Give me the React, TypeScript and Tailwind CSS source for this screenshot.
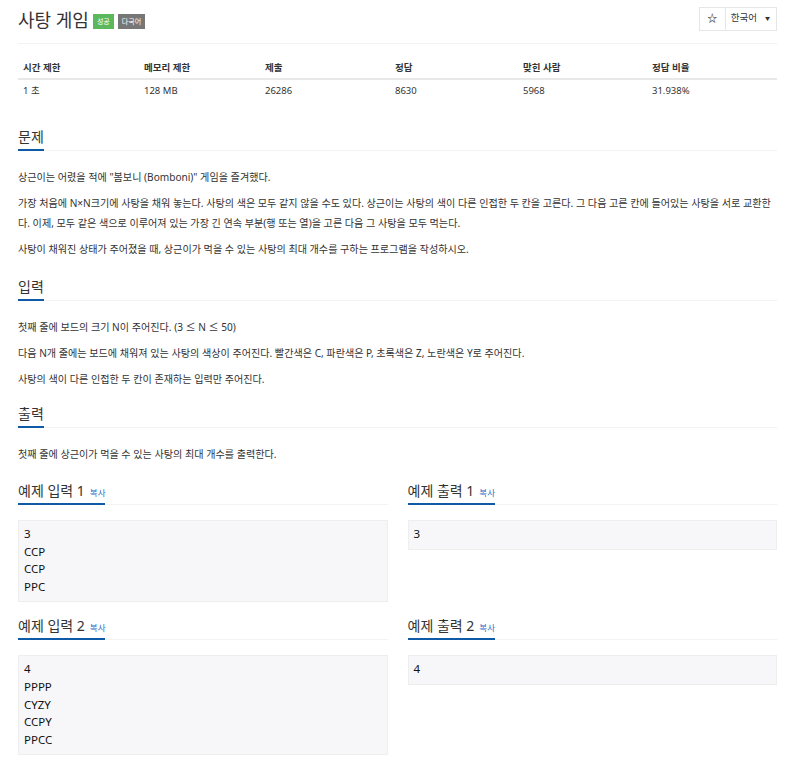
import React from "react";

const font = { fontFamily: '"Noto Sans", "Noto Sans CJK KR", sans-serif' };

const stats = [
  { label: "시간 제한", value: "1 초", w: "w-[121px]" },
  { label: "메모리 제한", value: "128 MB", w: "w-[121px]" },
  { label: "제출", value: "26286", w: "w-[130px]" },
  { label: "정답", value: "8630", w: "w-[128px]" },
  { label: "맞힌 사람", value: "5968", w: "w-[129px]" },
  { label: "정답 비율", value: "31.938%", w: "flex-1" },
];

function Heading({ children }: { children: React.ReactNode }) {
  return (
    <div className="border-b border-[#f3f3f3] mb-[16px]">
      <h2 className="inline-block text-[14px] leading-[22px] text-[#333] pb-[1px] border-b-2 border-[#0e5aa7] -mb-px">
        {children}
      </h2>
    </div>
  );
}

function SampleHeading({ title }: { title: string }) {
  return (
    <div className="border-b border-[#f3f3f3] mb-[15px]">
      <h2 className="inline-flex items-baseline text-[14px] leading-[20px] text-[#333] pb-0 border-b-2 border-[#0e5aa7] -mb-px">
        {title}
        <span className="text-[8.5px] text-[#2b6cc4] ml-[5px]">복사</span>
      </h2>
    </div>
  );
}

function SampleBox({ lines }: { lines: string[] }) {
  return (
    <pre
      className="bg-[#f7f7f9] border border-[#eeeeee] px-[5px] pt-[4px] pb-[6px] text-[11.5px] leading-[17.6px] text-[#111]"
      style={font}
    >
      {lines.join("\n")}
    </pre>
  );
}

export default function App() {
  return (
    <div className="bg-white min-h-[762px] pl-[18px] pr-[23px] text-[#333]" style={font}>
      <div className="flex items-center justify-between h-[44px] border-b border-[#f3f3f3]">
        <div className="flex items-center gap-[4px]">
          <h1 className="text-[18px] leading-[30px] text-[#333] mr-0 mt-[-4px]">사탕 게임</h1>
          <span className="bg-[#5cb85c] text-white text-[7px] leading-[15px] h-[15px] px-[4px]">
            성공
          </span>
          <span className="bg-[#777777] text-white text-[7px] leading-[15px] h-[15px] px-[4px]">
            다국어
          </span>
        </div>
        <div className="flex border border-[#e6e6e6] h-[24px] mt-[-6px] text-[9.5px]">
          <div className="w-[26px] flex items-center justify-center border-r border-[#e6e6e6] text-[10px] font-bold">
            ☆
          </div>
          <div className="flex items-center pl-[5px] pr-[6px] gap-[8px]">
            <span>한국어</span>
            <span className="text-[5px]">▼</span>
          </div>
        </div>
      </div>

      <div className="mt-[14px] text-[9.5px]">
        <div className="flex h-[22px] items-center font-bold border-b-2 border-[#e8e8e8] pl-[5px]">
          {stats.map((s) => (
            <div key={s.label} className={s.w}>
              {s.label}
            </div>
          ))}
        </div>
        <div className="flex h-[23px] items-center pl-[5px]">
          {stats.map((s) => (
            <div key={s.label} className={s.w}>
              {s.value}
            </div>
          ))}
        </div>
      </div>

      <section className="mt-[21px]">
        <Heading>문제</Heading>
        <div className="text-[10.1px] leading-[20px]">
          <p className="mb-[6px]">상근이는 어렸을 적에 "봄보니 (Bomboni)" 게임을 즐겨했다.</p>
          <p className="mb-[6px]">
            가장 처음에 N×N크기에 사탕을 채워 놓는다. 사탕의 색은 모두 같지 않을 수도 있다. 상근이는 사탕의 색이 다른 인접한 두 칸을 고른다. 그 다음 고른 칸에 들어있는 사탕을 서로 교환한다. 이제, 모두 같은 색으로 이루어져 있는 가장 긴 연속 부분(행 또는 열)을 고른 다음 그 사탕을 모두 먹는다.
          </p>
          <p>사탕이 채워진 상태가 주어졌을 때, 상근이가 먹을 수 있는 사탕의 최대 개수를 구하는 프로그램을 작성하시오.</p>
        </div>
      </section>

      <section className="mt-[15px]">
        <Heading>입력</Heading>
        <div className="text-[10.1px] leading-[20px]">
          <p className="mb-[6px]">첫째 줄에 보드의 크기 N이 주어진다. (3 ≤ N ≤ 50)</p>
          <p className="mb-[6px]">
            다음 N개 줄에는 보드에 채워져 있는 사탕의 색상이 주어진다. 빨간색은 C, 파란색은 P, 초록색은 Z, 노란색은 Y로 주어진다.
          </p>
          <p>사탕의 색이 다른 인접한 두 칸이 존재하는 입력만 주어진다.</p>
        </div>
      </section>

      <section className="mt-[12px]">
        <Heading>출력</Heading>
        <div className="text-[10.1px] leading-[20px]">
          <p>첫째 줄에 상근이가 먹을 수 있는 사탕의 최대 개수를 출력한다.</p>
        </div>
      </section>

      <div className="grid grid-cols-2 gap-x-[20px] mt-[14px]">
        <div>
          <SampleHeading title="예제 입력 1" />
          <SampleBox lines={["3", "CCP", "CCP", "PPC"]} />
        </div>
        <div>
          <SampleHeading title="예제 출력 1" />
          <SampleBox lines={["3"]} />
        </div>
        <div className="mt-[11px]">
          <SampleHeading title="예제 입력 2" />
          <SampleBox lines={["4", "PPPP", "CYZY", "CCPY", "PPCC"]} />
        </div>
        <div className="mt-[11px]">
          <SampleHeading title="예제 출력 2" />
          <SampleBox lines={["4"]} />
        </div>
      </div>
    </div>
  );
}
